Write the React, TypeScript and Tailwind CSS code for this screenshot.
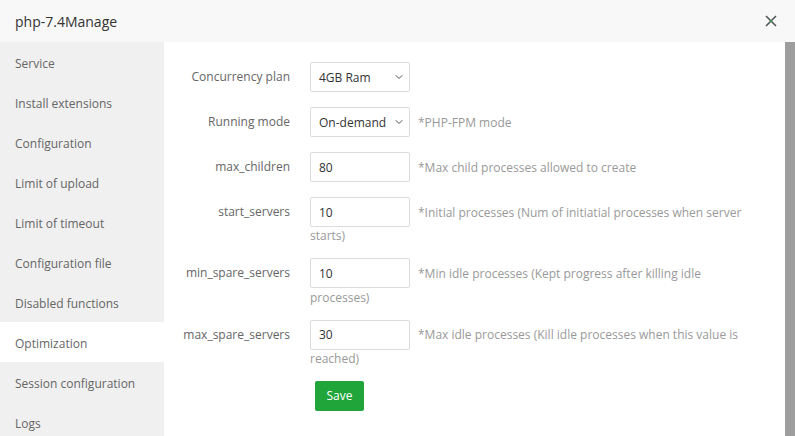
import { ChevronDown } from "lucide-react";

const menu = [
  "Service",
  "Install extensions",
  "Configuration",
  "Limit of upload",
  "Limit of timeout",
  "Configuration file",
  "Disabled functions",
  "Optimization",
  "Session configuration",
  "Logs",
];

const fields = [
  { label: "max_children", value: "80", hint: "*Max child processes allowed to create" },
  { label: "start_servers", value: "10", hint: "*Initial processes (Num of initiatial processes when server starts)" },
  { label: "min_spare_servers", value: "10", hint: "*Min idle processes (Kept progress after killing idle processes)" },
  { label: "max_spare_servers", value: "30", hint: "*Max idle processes (Kill idle processes when this value is reached)" },
];

function Select({ value }: { value: string }) {
  return (
    <span className="inline-flex items-center justify-between align-middle w-[100px] h-[30px] border border-[#dcdcdc] rounded-[2px] pl-[8px] pr-[4px] text-[#333] bg-white">
      <span>{value}</span>
      <ChevronDown size={12} strokeWidth={2} className="text-[#555]" />
    </span>
  );
}

function Row({ label, children }: { label: string; children: React.ReactNode }) {
  return (
    <div className="flex mb-[15px]">
      <div className="w-[126px] shrink-0 h-[30px] flex items-center justify-end text-[#666]">{label}</div>
      <div className="ml-[20px] w-[452px] leading-[15px] text-[#999]">{children}</div>
    </div>
  );
}

export default function App() {
  return (
    <div className="w-[795px] h-[436px] overflow-hidden bg-white flex flex-col text-[12px]" style={{ fontFamily: '"Open Sans", "Noto Sans", sans-serif' }}>
      {/* Header */}
      <div className="h-[42px] shrink-0 bg-[#f8f8f8] flex items-center justify-between pl-[15px] pr-[18px]">
        <span className="text-[14px] text-[#333]">php-7.4Manage</span>
        <svg width="12" height="12" viewBox="0 0 12 12">
          <path d="M1 1 L11 11 M11 1 L1 11" stroke="#555" strokeWidth="1.6" />
          <circle cx="6" cy="6" r="1" fill="#20a53a" />
        </svg>
      </div>

      <div className="flex flex-1 min-h-0">
        {/* Sidebar */}
        <div className="w-[164px] shrink-0 bg-[#f0f0f0] flex flex-col">
          {menu.map((m) => (
            <div
              key={m}
              className={`h-[40px] shrink-0 flex items-center pl-[15px] pt-[3px] text-[#666] ${m === "Optimization" ? "bg-white" : ""}`}
            >
              {m}
            </div>
          ))}
        </div>

        {/* Content */}
        <div className="flex-1 pt-[20px]">
          <Row label="Concurrency plan">
            <Select value="4GB Ram" />
          </Row>
          <Row label="Running mode">
            <Select value="On-demand" />
            <span className="ml-[8px] align-middle">*PHP-FPM mode</span>
          </Row>
          {fields.map((f) => (
            <Row key={f.label} label={f.label}>
              <input
                readOnly
                value={f.value}
                className="inline-block align-middle w-[100px] h-[30px] border border-[#dcdcdc] rounded-[2px] px-[8px] text-[#333] outline-none"
              />
              <span className="ml-[8px] align-middle">{f.hint}</span>
            </Row>
          ))}
          <div className="pl-[151px]">
            <button className="w-[49px] h-[30px] bg-[#20a53a] text-white rounded-[2px] text-[12px]">Save</button>
          </div>
        </div>

        {/* Scrollbar */}
        <div className="w-[10px] shrink-0 bg-[#9e9e9e]" />
      </div>
    </div>
  );
}
